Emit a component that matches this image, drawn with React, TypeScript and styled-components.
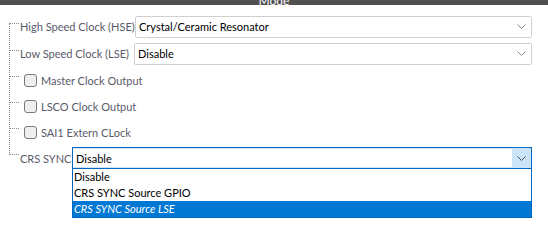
import React from "react";
import styled, { createGlobalStyle } from "styled-components";

const Global = createGlobalStyle`
  html, body { margin: 0; padding: 0; background: #fff; }
  body { font-family: Lato, "Liberation Sans", sans-serif; font-size: 11px; }
`;

const Page = styled.div`
  width: 548px;
  height: 247px;
  overflow: hidden;
  background: #fff;
`;

const Header = styled.div`
  height: 5px;
  background: #505050;
  overflow: hidden;
  display: flex;
  justify-content: center;
  align-items: flex-end;
`;

const HeaderTitle = styled.span`
  color: #fff;
  font-size: 12px;
  line-height: 14px;
  margin-bottom: -3px;
`;

const Tree = styled.div`
  position: relative;
  padding: 8px 16px 0 20px;
  display: flex;
  flex-direction: column;
  &::before {
    content: "";
    position: absolute;
    left: 9px;
    top: 18px;
    height: 132px;
    border-left: 1px dotted #8a8a8a;
  }
`;

const Row = styled.div<{ $h: number }>`
  position: relative;
  display: flex;
  align-items: center;
  height: ${(p) => p.$h}px;
  &::before {
    content: "";
    position: absolute;
    left: -11px;
    top: calc(50% - 4px);
    width: 10px;
    border-top: 1px dotted #8a8a8a;
  }
`;

const Label = styled.span<{ $w?: number }>`
  color: #5a5a6a;
  white-space: nowrap;
  flex: none;
  ${(p) => (p.$w ? `width: ${p.$w}px;` : "")}
`;

const Combo = styled.div<{ $focused?: boolean }>`
  position: relative;
  flex: 1;
  box-sizing: border-box;
  height: 22px;
  display: flex;
  align-items: stretch;
  border: 1px solid ${(p) => (p.$focused ? "#0067c0" : "#d0d0d0")};
  border-radius: ${(p) => (p.$focused ? "0" : "2px")};
  background: ${(p) => (p.$focused ? "#cce4f7" : "#fff")};
  color: #000;
`;

const ComboText = styled.div<{ $focused?: boolean }>`
  flex: 1;
  display: flex;
  align-items: center;
  padding-left: 3px;
  background: #fff;
  margin: ${(p) => (p.$focused ? "1px 0 1px 0" : "0")};
`;

const ComboButton = styled.div<{ $focused?: boolean }>`
  width: 19px;
  flex: none;
  display: flex;
  align-items: center;
  justify-content: center;
  background: ${(p) => (p.$focused ? "#cce4f7" : "#fff")};
  svg { display: block; }
`;

const CheckRow = styled(Row)`
  padding-left: 4px;
`;

const Box = styled.span`
  box-sizing: border-box;
  width: 13px;
  height: 13px;
  border: 1px solid #7a7a7a;
  border-radius: 3px;
  background: #efefef;
  margin-right: 4px;
  flex: none;
`;

const List = styled.div`
  position: absolute;
  top: 100%;
  left: -1px;
  right: -1px;
  box-sizing: border-box;
  border: 1px solid #0067c0;
  border-top-width: 1px;
  background: #fff;
  z-index: 2;
`;

const Item = styled.div<{ $selected?: boolean }>`
  height: 16px;
  line-height: 16px;
  padding-left: 1px;
  color: ${(p) => (p.$selected ? "#fff" : "#000")};
  background: ${(p) => (p.$selected ? "#0078d4" : "transparent")};
  font-style: ${(p) => (p.$selected ? "italic" : "normal")};
`;

const Chevron = ({ color }: { color: string }) => (
  <svg width="9" height="5" viewBox="0 0 9 5">
    <polyline points="0.5,0.5 4.5,4.5 8.5,0.5" fill="none" stroke={color} strokeWidth="1" />
  </svg>
);

const crsOptions = ["Disable", "CRS SYNC Source GPIO", "CRS SYNC Source LSE"];

export default function App() {
  return (
    <Page>
      <Global />
      <Header>
        <HeaderTitle>Mode</HeaderTitle>
      </Header>
      <Tree>
        <Row $h={27}>
          <Label $w={115}>High Speed Clock (HSE)</Label>
          <Combo>
            <ComboText>Crystal/Ceramic Resonator</ComboText>
            <ComboButton>
              <Chevron color="#8a8a8a" />
            </ComboButton>
          </Combo>
        </Row>
        <Row $h={27}>
          <Label $w={114}>Low Speed Clock (LSE)</Label>
          <Combo>
            <ComboText>Disable</ComboText>
            <ComboButton>
              <Chevron color="#8a8a8a" />
            </ComboButton>
          </Combo>
        </Row>
        <CheckRow $h={26}>
          <Box />
          <Label>Master Clock Output</Label>
        </CheckRow>
        <CheckRow $h={26}>
          <Box />
          <Label>LSCO Clock Output</Label>
        </CheckRow>
        <CheckRow $h={26}>
          <Box />
          <Label>SAI1 Extern CLock</Label>
        </CheckRow>
        <Row $h={26}>
          <Label $w={52}>CRS SYNC</Label>
          <Combo $focused>
            <ComboText $focused>Disable</ComboText>
            <ComboButton $focused>
              <Chevron color="#555" />
            </ComboButton>
            <List>
              {crsOptions.map((o, i) => (
                <Item key={o} $selected={i === 2}>
                  {o}
                </Item>
              ))}
            </List>
          </Combo>
        </Row>
      </Tree>
    </Page>
  );
}
